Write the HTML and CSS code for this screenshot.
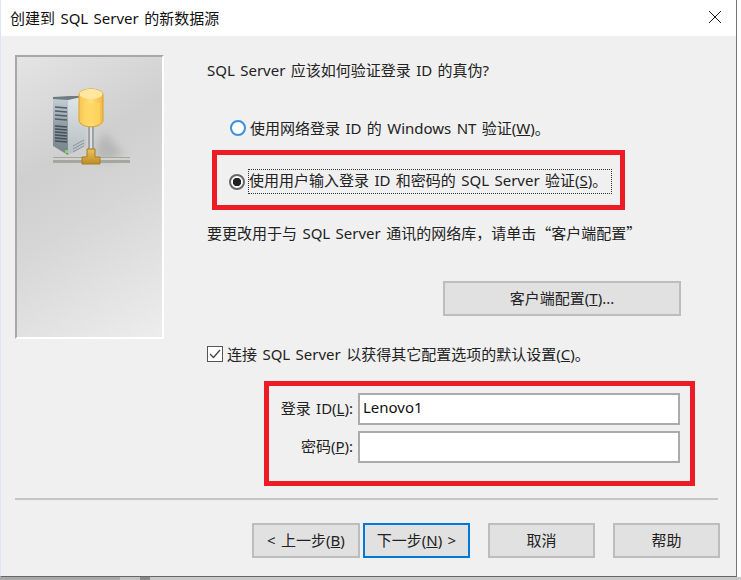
FILE: index.html
```html
<!DOCTYPE html>
<html lang="zh-CN">
<head>
  <meta charset="UTF-8">
  <meta name="viewport" content="width=device-width, initial-scale=1.0">
  <title>创建到 SQL Server 的新数据源</title>
  <link rel="stylesheet" href="styles.css">
</head>
<body>
  <div class="window">
    <div class="titlebar">
      <span class="title">创建到 SQL Server 的新数据源</span>
      <svg class="close" width="14" height="14" viewBox="0 0 14 14">
        <path d="M1 1L13 13M13 1L1 13" stroke="#1a1a1a" stroke-width="1" fill="none"/>
      </svg>
    </div>

    <div class="content">
      <div class="side-panel">
        <svg class="server-icon" width="82" height="82" viewBox="0 0 82 82">
          <defs>
            <linearGradient id="left-face" x1="0" y1="0" x2="0" y2="1">
              <stop offset="0" stop-color="#c3d0d6"/>
              <stop offset="0.5" stop-color="#8d9aa3"/>
              <stop offset="1" stop-color="#77838c"/>
            </linearGradient>
            <linearGradient id="right-face" x1="0" y1="0" x2="0" y2="1">
              <stop offset="0" stop-color="#dfe6e8"/>
              <stop offset="1" stop-color="#b5bec2"/>
            </linearGradient>
            <linearGradient id="cyl" x1="0" y1="0" x2="1" y2="0">
              <stop offset="0" stop-color="#f8c650"/>
              <stop offset="0.5" stop-color="#ffdf80"/>
              <stop offset="1" stop-color="#f5b93e"/>
            </linearGradient>
            <linearGradient id="foot" x1="0" y1="0" x2="0" y2="1">
              <stop offset="0" stop-color="#eec25a"/>
              <stop offset="1" stop-color="#bd8d28"/>
            </linearGradient>
            <filter id="soft" x="-30%" y="-30%" width="160%" height="160%">
              <feGaussianBlur stdDeviation="4"/>
            </filter>
          </defs>
          <path d="M44 66L54 44L74 66L56 74Z" fill="#8f8f8f" opacity="0.4" filter="url(#soft)"/>
          <!-- tower -->
          <path d="M3 10L18 12V67L3 58Z" fill="url(#left-face)"/>
          <path d="M18 12L36 8V57L18 67Z" fill="url(#right-face)"/>
          <path d="M3 9L20 8L36 8L18 12L3 11Z" fill="#6f7a82"/>
          <path d="M5 19L17 20M5 23L17 24M5 27L17 28M5 31L17 32" stroke="#525d65" stroke-width="1.6"/>
          <path d="M5 38L17 39M5 41L17 42M5 44L17 45M5 47L17 48M5 50L17 51M5 53L17 54" stroke="#465058" stroke-width="1.4"/>
          <path d="M23 58L34 52M23 61L34 55M23 64L34 58" stroke="#8b9499" stroke-width="1"/>
          <rect x="15" y="62" width="3" height="3" fill="#86d94f"/>
          <!-- network line -->
          <rect x="3" y="69" width="77" height="6" fill="#a6a6a0"/>
          <rect x="3" y="70" width="77" height="2" fill="#d2d2cd"/>
          <!-- pole and connector -->
          <rect x="38" y="38" width="6" height="24" fill="#9ea3a5"/>
          <rect x="40" y="38" width="2" height="24" fill="#dcdfe0"/>
          <path d="M37 61H45V69H50V76H32V69H37Z" fill="url(#foot)" stroke="#a87c1e" stroke-width="1"/>
          <!-- database -->
          <path d="M29 7C29 -1 53 -1 53 7V32C53 41 29 41 29 32Z" fill="url(#cyl)" stroke="#dba02c" stroke-width="1"/>
          <ellipse cx="41" cy="6" rx="11.5" ry="5" fill="#ffe7a0"/>
          <path d="M34 15H50V35L34 37Z" fill="#ffd660" opacity="0.75"/>
        </svg>
      </div>

      <div class="form">
        <p class="question">SQL Server 应该如何验证登录 ID 的真伪?</p>

        <div class="option option-first">
          <span class="radio radio-focus"></span>
          <span class="option-text">使用网络登录 ID 的 Windows NT 验证(<u>W</u>)。</span>
        </div>

        <div class="mark mark-auth">
          <div class="option">
            <span class="radio radio-on"></span>
            <span class="focus-text">使用用户输入登录 ID 和密码的 SQL Server 验证(<u>S</u>)。</span>
          </div>
        </div>

        <p class="hint">要更改用于与 SQL Server 通讯的网络库，请单击<span class="cjk-quote">“客户端配置”</span></p>

        <div class="client-row">
          <button class="btn btn-client">客户端配置(<u>T</u>)...</button>
        </div>

        <div class="check-row">
          <svg class="check" width="16" height="16" viewBox="0 0 16 16">
            <rect x="0.5" y="0.5" width="15" height="15" fill="#fff" stroke="#555"/>
            <path d="M3 8L6.5 11.5L13 4" stroke="#444" stroke-width="1.3" fill="none"/>
          </svg>
          <span class="option-text">连接 SQL Server 以获得其它配置选项的默认设置(<u>C</u>)。</span>
        </div>

        <div class="mark mark-login">
          <div class="field">
            <label class="field-label">登录 ID(<u>L</u>):</label>
            <div class="input">Lenovo1</div>
          </div>
          <div class="field">
            <label class="field-label">密码(<u>P</u>):</label>
            <div class="input"></div>
          </div>
        </div>
      </div>
    </div>

    <div class="separator"></div>

    <div class="actions">
      <button class="btn btn-back">&lt; 上一步(<u>B</u>)</button>
      <button class="btn btn-next">下一步(<u>N</u>) &gt;</button>
      <button class="btn btn-cancel">取消</button>
      <button class="btn btn-help">帮助</button>
    </div>
  </div>
  <div class="desktop-strip"></div>
</body>
</html>
```

FILE: styles.css
```css
html, body {
  margin: 0;
  padding: 0;
  height: 580px;
  overflow: hidden;
}

body {
  background-color: #fff;
  font-family: 'Noto Sans', 'Noto Sans CJK SC', sans-serif;
  font-size: 15px;
  word-spacing: 1.5px;
  color: #222;
}

.window {
  width: 737px;
  height: 577px;
  background-color: #f0f0f0;
  box-sizing: border-box;
  border-left: 1px solid #dbe6f5;
  border-right: 1px solid #777;
  border-bottom: 1px solid #666;
  display: flex;
  flex-direction: column;
}

.desktop-strip {
  height: 3px;
  background: linear-gradient(90deg, #a8a8a8 0 120px, #c4c4c4 120px 140px, #888 140px 150px, #c8c8c8 150px);
}

.titlebar {
  height: 36px;
  flex: none;
  box-sizing: border-box;
  background-color: #fff;
  display: flex;
  align-items: center;
  justify-content: space-between;
  padding: 0 14px 2px 9px;
}

.title {
  color: #111;
}

.close {
  display: block;
}

.content {
  display: flex;
  padding: 19px 0 0 14px;
  height: 444px;
  flex: none;
  box-sizing: border-box;
}

.side-panel {
  width: 149px;
  height: 284px;
  flex: none;
  box-sizing: border-box;
  border: 2px solid #a8a8a8;
  border-right: 2px solid #fff;
  border-bottom: 2px solid #fff;
  background: linear-gradient(150deg, #e4e4e4 0%, #cfcfcf 35%, #d6d6d6 55%, #ededed 100%);
  padding: 31px 0 0 33px;
}

.server-icon {
  display: block;
}

.form {
  margin-left: 43px;
  width: 500px;
}

.question {
  margin: 5px 0 0 0;
  line-height: 21px;
}

.option {
  display: flex;
  align-items: center;
  height: 24px;
}

.option-first {
  margin: 35px 0 0 23px;
}

.option-text {
  margin-bottom: 2px;
}

.radio {
  width: 16px;
  height: 16px;
  flex: none;
  box-sizing: border-box;
  margin-right: 4px;
  border-radius: 50%;
  background-color: #fff;
}

.radio-focus {
  border: 2px solid #3d8fd8;
}

.radio-on {
  background: radial-gradient(circle, #222 0 4px, #fff 4.5px);
  border: 2px solid #666;
}

.mark {
  border: 5px solid #ed1c24;
  box-sizing: border-box;
}

.mark-auth {
  margin: 10px 0 0 5px;
  width: 413px;
  height: 60px;
  padding: 14px 0 0 12px;
}

.mark-auth .option {
  height: 25px;
}

.mark-auth .radio {
  margin-right: 3px;
}

.focus-text {
  outline: 1px dotted #333;
  outline-offset: -1px;
  height: 25px;
  box-sizing: border-box;
  line-height: 22px;
  padding: 0 5px 0 1px;
  white-space: nowrap;
}

.hint {
  margin: 12px 0 0 0;
  line-height: 21px;
  white-space: nowrap;
}

.cjk-quote {
  font-family: 'Noto Sans CJK SC', sans-serif;
}

.client-row {
  margin: 37px 0 0 236px;
}

.btn {
  font-family: inherit;
  font-size: 15px;
  word-spacing: 1.5px;
  color: #222;
  background-color: #e1e1e1;
  border: 2px solid #bdbdbd;
  padding: 0 0 3px 0;
  height: 35px;
  display: block;
}

.btn-client {
  width: 238px;
}

.check-row {
  display: flex;
  align-items: center;
  gap: 4px;
  height: 16px;
  margin-top: 30px;
}

.check {
  flex: none;
}

.mark-login {
  margin: 19px 0 0 57px;
  width: 431px;
  height: 105px;
  padding: 7px 0 0 0;
  display: flex;
  flex-direction: column;
  gap: 6px;
}

.field {
  display: flex;
  align-items: center;
  height: 32px;
}

.field-label {
  width: 84px;
  flex: none;
  text-align: right;
  margin-right: 5px;
  padding-bottom: 3px;
}

.input {
  width: 322px;
  height: 32px;
  box-sizing: border-box;
  border: 2px solid #ababab;
  background-color: #fff;
  padding: 0 3px;
  line-height: 24px;
  color: #111;
}

.separator {
  margin: 18px 0 0 14px;
  width: 703px;
  height: 2px;
  background-color: #c6c6c6;
}

.actions {
  display: flex;
  margin: 23px 0 0 251px;
}

.btn-back {
  width: 108px;
}

.btn-next {
  width: 107px;
  margin-left: 3px;
  border-color: #0078d7;
}

.btn-cancel {
  width: 107px;
  margin-left: 18px;
}

.btn-help {
  width: 107px;
  margin-left: 18px;
}
```
